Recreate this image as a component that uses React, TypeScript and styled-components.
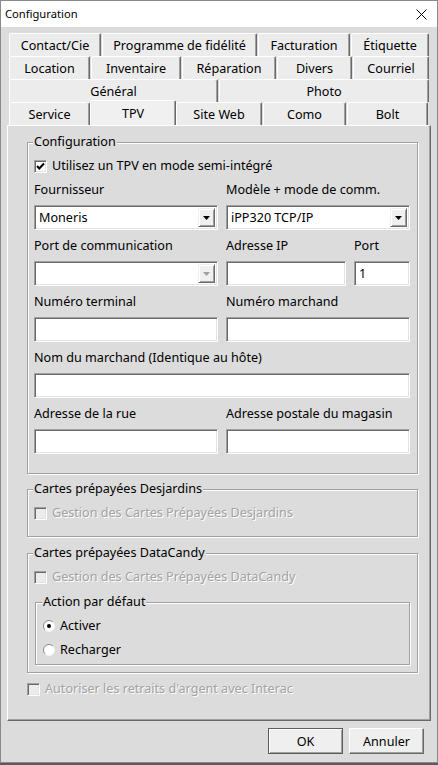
import React from 'react';
import styled, { createGlobalStyle } from 'styled-components';

const GlobalStyle = createGlobalStyle`
  html, body {
    margin: 0;
    padding: 0;
    background: #5a5a5a;
  }
  body {
    font-family: "Noto Sans", "Open Sans", sans-serif;
    font-size: 12.6px;
    color: #000;
  }
`;

const Window = styled.div`
  width: 438px;
  height: 763px;
  box-sizing: border-box;
  border: 1px solid #8a8a8a;
  background: #dcdcdc;
  display: flex;
  flex-direction: column;
`;

const TitleBar = styled.div`
  height: 26px;
  flex: none;
  background: #fff;
  display: flex;
  align-items: center;
  justify-content: space-between;
  padding: 0 10px 0 4px;
`;

const TitleText = styled.span`
  font-size: 11.2px;
  line-height: 16px;
`;

const Content = styled.div`
  display: flex;
  flex-direction: column;
  padding: 6px 0 0 6px;
`;

const TabStrip = styled.div`
  width: 420px;
  margin-left: 2px;
  display: flex;
  flex-direction: column;
`;

const TabRow = styled.div`
  display: flex;
  align-items: flex-end;
  gap: 1px;
  height: 23px;
`;

const Tab = styled.div<{ $w: number; $active?: boolean }>`
  width: ${p => p.$w}px;
  height: ${p => (p.$active ? 25 : 23)}px;
  margin-top: ${p => (p.$active ? -2 : 0)}px;
  margin-left: ${p => (p.$active ? -1 : 0)}px;
  margin-right: ${p => (p.$active ? -1 : 0)}px;
  padding-top: ${p => (p.$active ? 0 : 1)}px;
  box-sizing: border-box;
  flex: none;
  position: relative;
  z-index: ${p => (p.$active ? 1 : 0)};
  background: ${p => (p.$active ? '#f0f0f0' : '#ececec')};
  border-top: 1px solid #fff;
  border-left: 1px solid #fff;
  border-right: 1px solid #696969;
  border-radius: 2px 2px 0 0;
  box-shadow: inset -1px 0 0 #a0a0a0;
  display: flex;
  align-items: center;
  justify-content: center;
  white-space: nowrap;
`;

const Panel = styled.div`
  width: 424px;
  height: 596px;
  box-sizing: border-box;
  border: 1px solid;
  border-color: #fff #696969 #696969 #fff;
  box-shadow: inset -1px -1px 0 #a0a0a0;
  padding: 16px 12px 0 19px;
  display: flex;
  flex-direction: column;
  align-items: flex-start;
`;

const Group = styled.div<{ $mt?: number; $pb: number; $pl?: number }>`
  align-self: stretch;
  margin-top: ${p => p.$mt ?? 0}px;
  border: 1px solid #a0a0a0;
  box-shadow: inset 1px 1px 0 #fff, 1px 1px 0 #fff;
  padding: 0 7px ${p => p.$pb}px ${p => p.$pl ?? 6}px;
  display: flex;
  flex-direction: column;
  gap: 8px;
`;

const InnerGroup = styled(Group)`
  margin-left: 1px;
`;

const Caption = styled.div`
  align-self: flex-start;
  margin: -9px 0 0 -1px;
  padding: 0 1px;
  line-height: 16px;
  background: #dcdcdc;
`;

const OptionRow = styled.label<{ $disabled?: boolean; $mt?: number }>`
  display: flex;
  align-items: center;
  gap: 5px;
  height: 16px;
  margin-top: ${p => p.$mt ?? 0}px;
  line-height: 16px;
  white-space: nowrap;
  color: ${p => (p.$disabled ? '#a3a3a3' : '#000')};
  text-shadow: ${p => (p.$disabled ? '1px 1px 0 #fff' : 'none')};
`;

const Box = styled.span<{ $disabled?: boolean }>`
  width: 13px;
  height: 13px;
  flex: none;
  box-sizing: border-box;
  background: ${p => (p.$disabled ? '#ececec' : '#fff')};
  border: 1px solid;
  border-color: #a0a0a0 #fff #fff #a0a0a0;
  box-shadow: inset 1px 1px 0 #696969, inset -1px -1px 0 #e3e3e3;
  display: flex;
  align-items: center;
  justify-content: center;
`;

const FieldRow = styled.div<{ $cols: string }>`
  display: grid;
  grid-template-columns: ${p => p.$cols};
  column-gap: 8px;
`;

const Field = styled.div`
  display: flex;
  flex-direction: column;
  gap: 7px;
  min-width: 0;
`;

const Label = styled.span`
  line-height: 16px;
  white-space: nowrap;
`;

const Input = styled.div`
  height: 25px;
  box-sizing: border-box;
  background: #fff;
  border: 1px solid;
  border-color: #a0a0a0 #fff #fff #a0a0a0;
  box-shadow: inset 1px 1px 0 #696969, inset -1px -1px 0 #e3e3e3;
  padding: 0 4px;
  display: flex;
  align-items: center;
  line-height: 16px;
`;

const Combo = styled(Input)`
  padding: 2px 2px 2px 4px;
  justify-content: space-between;
`;

const DropButton = styled.span`
  width: 17px;
  align-self: stretch;
  box-sizing: border-box;
  background: #f0f0f0;
  border: 1px solid;
  border-color: #f0f0f0 #696969 #696969 #f0f0f0;
  box-shadow: inset 1px 1px 0 #fff, inset -1px -1px 0 #a0a0a0;
  display: flex;
  align-items: center;
  justify-content: center;
`;

const Footer = styled.div`
  display: flex;
  justify-content: flex-end;
  gap: 6px;
  padding: 7px 13px 0 0;
`;

const Button = styled.div<{ $default?: boolean }>`
  width: 75px;
  height: 26px;
  box-sizing: border-box;
  background: #efefef;
  border: 1px solid;
  border-color: ${p => (p.$default ? '#5c5c5c' : '#fff #696969 #696969 #fff')};
  box-shadow: ${p =>
    p.$default
      ? 'inset 1px 1px 0 #fff, inset -1px -1px 0 #a0a0a0'
      : 'inset -1px -1px 0 #a0a0a0'};
  display: flex;
  align-items: center;
  justify-content: center;
`;

const CheckBox = ({ checked, disabled }: { checked?: boolean; disabled?: boolean }) => (
  <Box $disabled={disabled}>
    {checked && (
      <svg width="9" height="9" viewBox="0 0 9 9">
        <polyline points="1,4 3.3,6.5 8,1.5" fill="none" stroke="#000" strokeWidth="2" />
      </svg>
    )}
  </Box>
);

const Radio = ({ checked }: { checked?: boolean }) => (
  <svg width="12" height="12" viewBox="0 0 12 12" style={{ flex: 'none' }}>
    <circle cx="6" cy="6" r="5.5" fill="#fff" />
    <path d="M2.1 9.9 A5.5 5.5 0 0 1 9.9 2.1" fill="none" stroke="#8a8a8a" />
    <path d="M9.9 2.1 A5.5 5.5 0 0 1 2.1 9.9" fill="none" stroke="#f4f4f4" />
    {checked && <circle cx="6" cy="6" r="2" fill="#000" />}
  </svg>
);

const Arrow = ({ disabled }: { disabled?: boolean }) => (
  <svg width="7" height="4" viewBox="0 0 7 4">
    <polygon points="0,0 7,0 3.5,4" fill={disabled ? '#a0a0a0' : '#000'} />
  </svg>
);

const Select = ({ value, disabled }: { value?: string; disabled?: boolean }) => (
  <Combo>
    <span>{value}</span>
    <DropButton>
      <Arrow disabled={disabled} />
    </DropButton>
  </Combo>
);

const tabRows: { label: string; w: number; active?: boolean }[][] = [
  [
    { label: 'Contact/Cie', w: 92 },
    { label: 'Programme de fidélité', w: 155 },
    { label: 'Facturation', w: 92 },
    { label: 'Étiquette', w: 78 },
  ],
  [
    { label: 'Location', w: 81 },
    { label: 'Inventaire', w: 90 },
    { label: 'Réparation', w: 94 },
    { label: 'Divers', w: 75 },
    { label: 'Courriel', w: 76 },
  ],
  [
    { label: 'Général', w: 209 },
    { label: 'Photo', w: 210 },
  ],
  [
    { label: 'Service', w: 81 },
    { label: 'TPV', w: 86, active: true },
    { label: 'Site Web', w: 86 },
    { label: 'Como', w: 83 },
    { label: 'Bolt', w: 81 },
  ],
];

export default function App() {
  return (
    <>
      <GlobalStyle />
      <Window>
        <TitleBar>
          <TitleText>Configuration</TitleText>
          <svg width="11" height="11" viewBox="0 0 11 11">
            <path d="M0.5 0.5 L10.5 10.5 M10.5 0.5 L0.5 10.5" stroke="#000" strokeWidth="1" />
          </svg>
        </TitleBar>

        <Content>
          <TabStrip>
            {tabRows.map((row, i) => (
              <TabRow key={i}>
                {row.map(t => (
                  <Tab key={t.label} $w={t.w} $active={t.active}>
                    {t.label}
                  </Tab>
                ))}
              </TabRow>
            ))}
          </TabStrip>

          <Panel>
            <Group $pb={19}>
              <Caption>Configuration</Caption>
              <OptionRow>
                <CheckBox checked />
                Utilisez un TPV en mode semi-intégré
              </OptionRow>
              <FieldRow $cols="184px 184px">
                <Field>
                  <Label>Fournisseur</Label>
                  <Select value="Moneris" />
                </Field>
                <Field>
                  <Label>Modèle + mode de comm.</Label>
                  <Select value="iPP320 TCP/IP" />
                </Field>
              </FieldRow>
              <FieldRow $cols="184px 120px 56px">
                <Field>
                  <Label>Port de communication</Label>
                  <Select disabled />
                </Field>
                <Field>
                  <Label>Adresse IP</Label>
                  <Input />
                </Field>
                <Field>
                  <Label>Port</Label>
                  <Input>1</Input>
                </Field>
              </FieldRow>
              <FieldRow $cols="184px 184px">
                <Field>
                  <Label>Numéro terminal</Label>
                  <Input />
                </Field>
                <Field>
                  <Label>Numéro marchand</Label>
                  <Input />
                </Field>
              </FieldRow>
              <FieldRow $cols="376px">
                <Field>
                  <Label>Nom du marchand (Identique au hôte)</Label>
                  <Input />
                </Field>
              </FieldRow>
              <FieldRow $cols="184px 184px">
                <Field>
                  <Label>Adresse de la rue</Label>
                  <Input />
                </Field>
                <Field>
                  <Label>Adresse postale du magasin</Label>
                  <Input />
                </Field>
              </FieldRow>
            </Group>

            <Group $mt={15} $pb={15}>
              <Caption>Cartes prépayées Desjardins</Caption>
              <OptionRow $disabled>
                <CheckBox disabled />
                Gestion des Cartes Prépayées Desjardins
              </OptionRow>
            </Group>

            <Group $mt={16} $pb={7}>
              <Caption>Cartes prépayées DataCandy</Caption>
              <OptionRow $disabled>
                <CheckBox disabled />
                Gestion des Cartes Prépayées DataCandy
              </OptionRow>
              <InnerGroup $mt={9} $pb={6} $pl={7}>
                <Caption>Action par défaut</Caption>
                <OptionRow>
                  <Radio checked />
                  Activer
                </OptionRow>
                <OptionRow>
                  <Radio />
                  Recharger
                </OptionRow>
              </InnerGroup>
            </Group>

            <OptionRow $disabled $mt={8}>
              <CheckBox disabled />
              Autoriser les retraits d'argent avec Interac
            </OptionRow>
          </Panel>

          <Footer>
            <Button $default>OK</Button>
            <Button>Annuler</Button>
          </Footer>
        </Content>
      </Window>
    </>
  );
}
